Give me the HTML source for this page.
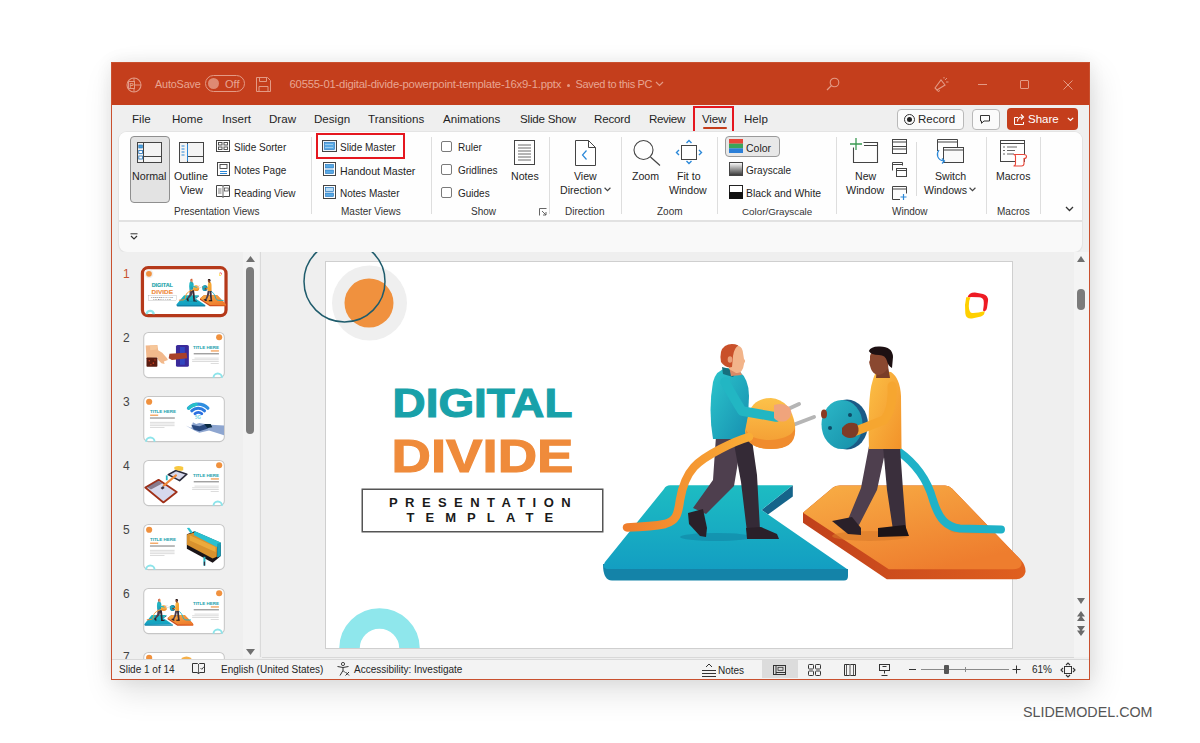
<!DOCTYPE html>
<html><head><meta charset="utf-8">
<style>
*{margin:0;padding:0;box-sizing:border-box}
html,body{width:1200px;height:743px;overflow:hidden;background:#fff;font-family:"Liberation Sans",sans-serif;color:#262626;position:relative}
.a{position:absolute}
.t{position:absolute;white-space:nowrap;line-height:1}
svg{position:absolute;overflow:visible}
.tt{color:#e8a592;font-size:11.5px}
.tab{font-size:11.6px;color:#1f1f1f;top:113px}
.rl{font-size:10px;color:#1f1f1f}
.gl{font-size:10px;color:#333;top:207px}
.vs{position:absolute;width:1px;background:#dedede;top:137px;height:77px}
.num{font-size:12px;color:#444}
.thumb{position:absolute;left:143px;width:82px;height:46px;background:#fff;border:1px solid #c8c8c8;border-radius:5px;overflow:hidden}
.st{font-size:10px;color:#262626;top:665px}
</style></head><body>
<!-- window shadow -->
<div class="a" style="left:111px;top:62px;width:979px;height:618px;box-shadow:0 0 16px rgba(0,0,0,0.07), 4px 12px 30px rgba(0,0,0,0.12)"></div>
<!-- window base -->
<div class="a" style="left:111px;top:62px;width:979px;height:618px;background:#efefef"></div>
<!-- title bar -->
<div class="a" style="left:111px;top:62px;width:979px;height:42.6px;background:#c43e1c"></div>

<!-- title bar content -->
<svg style="left:126px;top:77px" width="16" height="16" viewBox="0 0 16 16"><circle cx="8" cy="8" r="7" fill="none" stroke="#e39a85" stroke-width="1.1"/><path d="M8 1v14M8 8h7" stroke="#e39a85" stroke-width="1"/><rect x="2.5" y="4.5" width="6" height="7" fill="#c43e1c" stroke="#e39a85" stroke-width="1"/><text x="3.6" y="10.6" font-size="6.5" fill="#e39a85" font-family="Liberation Sans" font-weight="bold">P</text></svg>
<div class="t tt" style="left:155px;top:79px;font-size:10.8px;letter-spacing:-0.15px">AutoSave</div>
<div class="a" style="left:205px;top:75px;width:40px;height:17px;border:1px solid #e39a85;border-radius:9px"></div>
<div class="a" style="left:208px;top:78px;width:11px;height:11px;background:#de8a72;border-radius:50%"></div>
<div class="t tt" style="left:225px;top:79px;font-size:11px">Off</div>
<svg style="left:256px;top:77px" width="15" height="15" viewBox="0 0 15 15"><path d="M0.5 0.5h11l3 3v11h-14z" fill="none" stroke="#e39a85" stroke-width="1"/><path d="M3.5 0.5v4h7v-4M3 14.5v-5h9v5" fill="none" stroke="#e39a85" stroke-width="1"/></svg>
<div class="t tt" style="left:289.5px;top:79px;font-size:11.3px;letter-spacing:-0.21px">60555-01-digital-divide-powerpoint-template-16x9-1.pptx</div>
<div class="a" style="left:567px;top:84px;width:3px;height:3px;background:#e39a85;border-radius:50%"></div>
<div class="t tt" style="left:575.5px;top:79px;font-size:11px;letter-spacing:-0.33px">Saved to this PC</div>
<svg style="left:655px;top:81px" width="9" height="6" viewBox="0 0 9 6"><path d="M1 1l3.5 3.5L8 1" fill="none" stroke="#e39a85" stroke-width="1.2"/></svg>
<svg style="left:826px;top:77px" width="14" height="14" viewBox="0 0 14 14"><circle cx="8.5" cy="5.5" r="4.3" fill="none" stroke="#e39a85" stroke-width="1.1"/><path d="M5.5 8.5L1 13" stroke="#e39a85" stroke-width="1.3"/></svg>
<svg style="left:934px;top:77px" width="15" height="15" viewBox="0 0 15 15"><path d="M1 11l6-8 4 5-8 5z" fill="none" stroke="#e39a85" stroke-width="1.1"/><path d="M3 13l1 1.5 2-1" fill="none" stroke="#e39a85" stroke-width="1"/><path d="M11 3l2-2M12 5h2.5M10 1.5V0" stroke="#e39a85" stroke-width="1"/></svg>
<div class="a" style="left:978px;top:84px;width:9px;height:1px;background:#e39a85"></div>
<div class="a" style="left:1020px;top:80px;width:9px;height:9px;border:1px solid #e39a85;border-radius:1px"></div>
<svg style="left:1063px;top:80px" width="10" height="10" viewBox="0 0 10 10"><path d="M0.5 0.5l9 9M9.5 0.5l-9 9" stroke="#e39a85" stroke-width="1"/></svg>

<!-- tabs -->
<div class="t tab" style="left:132px">File</div>
<div class="t tab" style="left:172px">Home</div>
<div class="t tab" style="left:222px">Insert</div>
<div class="t tab" style="left:269px">Draw</div>
<div class="t tab" style="left:314px">Design</div>
<div class="t tab" style="left:368px">Transitions</div>
<div class="t tab" style="left:443px">Animations</div>
<div class="t tab" style="left:520px;letter-spacing:-0.2px">Slide Show</div>
<div class="t tab" style="left:594px;letter-spacing:-0.2px">Record</div>
<div class="t tab" style="left:649px;letter-spacing:-0.35px">Review</div>
<div class="t tab" style="left:702px;letter-spacing:-0.2px">View</div>
<div class="a" style="left:703px;top:127px;width:24px;height:2px;background:#c43e1c;border-radius:1px"></div>
<div class="t tab" style="left:744px">Help</div>
<div class="a" style="left:693px;top:106px;width:41px;height:30px;border:2px solid #e5171f"></div>
<!-- record / comment / share -->
<div class="a" style="left:897px;top:109px;width:67px;height:21px;border:1px solid #b9b9b9;border-radius:4px;background:#fbfbfb"></div>
<div class="a" style="left:904px;top:114px;width:11px;height:11px;border:1px solid #333;border-radius:50%"></div>
<div class="a" style="left:907px;top:117px;width:5px;height:5px;background:#222;border-radius:50%"></div>
<div class="t" style="left:918px;top:114px;font-size:11.5px;color:#262626">Record</div>
<div class="a" style="left:972px;top:109px;width:28px;height:21px;border:1px solid #b9b9b9;border-radius:4px;background:#fbfbfb"></div>
<svg style="left:979.5px;top:114.5px" width="10" height="9" viewBox="0 0 10 9"><path d="M0.5 0.5h9v5.5h-5.5l-2.5 2.3v-2.3h-1z" fill="none" stroke="#333" stroke-width="1"/></svg>
<div class="a" style="left:1007px;top:108px;width:71px;height:22px;background:#c43e1c;border-radius:4px"></div>
<svg style="left:1013px;top:113px" width="13" height="12" viewBox="0 0 13 12"><path d="M5 4.5H1.5v7h9V9" fill="none" stroke="#fff" stroke-width="1"/><path d="M4.5 8.5c0-3 2-4.5 5-4.5M8 1.5l2.5 2.5L8 6.5" fill="none" stroke="#fff" stroke-width="1.1"/></svg>
<div class="t" style="left:1028px;top:114px;font-size:11.5px;color:#fff">Share</div>
<svg style="left:1067px;top:117px" width="7" height="5" viewBox="0 0 7 5"><path d="M0.8 0.8l2.7 2.7 2.7-2.7" fill="none" stroke="#fff" stroke-width="1.2"/></svg>

<!-- ribbon card -->
<div class="a" style="left:119px;top:132px;width:963px;height:120px;background:#f9f9f9;border-radius:8px;box-shadow:0 0 0 1px #e4e4e4, 0 1px 2px rgba(0,0,0,0.06)"></div>
<div class="a" style="left:119px;top:132px;width:963px;height:88px;background:#fefefe;border-radius:8px 8px 0 0"></div>
<div class="a" style="left:119px;top:220px;width:963px;height:1.5px;background:#e2e2e2"></div>


<!-- ===== Presentation Views ===== -->
<div class="a" style="left:130px;top:136px;width:40px;height:67px;border:1px solid #8f8f8f;border-radius:4px;background:#e3e3e3"></div>
<svg style="left:137px;top:142px" width="25" height="21" viewBox="0 0 25 21"><rect x="0.5" y="0.5" width="24" height="20" fill="#f4f4f4" stroke="#444" stroke-width="1"/><path d="M6.5 0.5v20M6.5 14.5h18" stroke="#444" stroke-width="1"/><rect x="1.8" y="3" width="3.6" height="3" fill="#4aa3df" stroke="#1d6fb8" stroke-width="0.6"/><rect x="1.8" y="8.5" width="3.6" height="3" fill="#fff" stroke="#1d6fb8" stroke-width="0.8"/><rect x="1.8" y="14" width="3.6" height="3" fill="#fff" stroke="#1d6fb8" stroke-width="0.8"/></svg>
<div class="t rl" style="left:132px;top:171px;font-size:10.7px">Normal</div>
<svg style="left:179px;top:142px" width="25" height="21" viewBox="0 0 25 21"><rect x="0.5" y="0.5" width="24" height="20" fill="#f4f4f4" stroke="#444" stroke-width="1"/><path d="M8.5 0.5v20M8.5 14.5h16" stroke="#444" stroke-width="1"/><path d="M8.5 2v17" stroke="#2b88d8" stroke-width="1"/><path d="M2.5 4h3M2.5 7h3M2.5 10h3M2.5 13h3" stroke="#2b88d8" stroke-width="1"/></svg>
<div class="t rl" style="left:174px;top:171px;font-size:10.7px">Outline</div>
<div class="t rl" style="left:180px;top:185px;font-size:10.7px">View</div>
<svg style="left:216px;top:140px" width="14" height="12" viewBox="0 0 14 12"><rect x="0.5" y="0.5" width="13" height="11" fill="none" stroke="#444"/><rect x="2.5" y="2.5" width="3.5" height="2.5" fill="none" stroke="#444" stroke-width="0.9"/><rect x="8" y="2.5" width="3.5" height="2.5" fill="none" stroke="#444" stroke-width="0.9"/><rect x="2.5" y="7" width="3.5" height="2.5" fill="none" stroke="#444" stroke-width="0.9"/><rect x="8" y="7" width="3.5" height="2.5" fill="none" stroke="#444" stroke-width="0.9"/></svg>
<div class="t rl" style="left:234px;top:143px">Slide Sorter</div>
<svg style="left:217px;top:162px" width="13" height="14" viewBox="0 0 13 14"><rect x="0.5" y="0.5" width="12" height="13" fill="none" stroke="#444"/><rect x="3" y="2.5" width="7" height="4" fill="none" stroke="#444" stroke-width="0.9"/><path d="M3 9.5h7M3 11.5h7" stroke="#2b88d8" stroke-width="1"/></svg>
<div class="t rl" style="left:234px;top:166px">Notes Page</div>
<svg style="left:216px;top:185px" width="14" height="13" viewBox="0 0 14 13"><path d="M0.5 0.5h6l0.5 1 0.5-1h6v11h-6l-0.5 1-0.5-1h-6z" fill="none" stroke="#444"/><path d="M7 1.5v10" stroke="#444" stroke-width="0.8"/><path d="M2 4h3.5M2 6h3.5M2 8h3.5" stroke="#444" stroke-width="0.7"/><rect x="8.6" y="3" width="3.6" height="3" fill="none" stroke="#444" stroke-width="0.7"/></svg>
<div class="t rl" style="left:234px;top:189px">Reading View</div>
<div class="t gl" style="left:174px">Presentation Views</div>
<div class="vs" style="left:311px"></div>

<!-- ===== Master Views ===== -->
<div class="a" style="left:316px;top:133px;width:89px;height:26px;border:2px solid #e5171f"></div>
<svg style="left:322px;top:140px" width="15" height="12" viewBox="0 0 15 12"><rect x="0.5" y="0.5" width="14" height="11" fill="#e9f2fb" stroke="#444"/><rect x="2.5" y="2.5" width="10" height="7" fill="#58a9e5" stroke="#1d6fb8" stroke-width="0.6"/><path d="M3.5 4.5h8M3.5 7.5h8" stroke="#fff" stroke-width="0.8" stroke-dasharray="1 1"/></svg>
<div class="t rl" style="left:340px;top:143px">Slide Master</div>
<svg style="left:323px;top:162px" width="13" height="14" viewBox="0 0 13 14"><rect x="0.5" y="0.5" width="12" height="13" fill="#fff" stroke="#444"/><rect x="2.5" y="2.5" width="8" height="3.5" fill="#58a9e5" stroke="#1d6fb8" stroke-width="0.6"/><rect x="2.5" y="8" width="8" height="3.5" fill="#58a9e5" stroke="#1d6fb8" stroke-width="0.6"/></svg>
<div class="t rl" style="left:340px;top:166px;font-size:10.6px">Handout Master</div>
<svg style="left:323px;top:185px" width="13" height="14" viewBox="0 0 13 14"><rect x="0.5" y="0.5" width="12" height="13" fill="#fff" stroke="#444"/><rect x="2.5" y="2.5" width="8" height="4" fill="#b9dcf5" stroke="#1d6fb8" stroke-width="0.7"/><rect x="2.5" y="8" width="8" height="3.5" fill="#58a9e5" stroke="#1d6fb8" stroke-width="0.6"/></svg>
<div class="t rl" style="left:340px;top:189px">Notes Master</div>
<div class="t gl" style="left:341px">Master Views</div>
<div class="vs" style="left:431px"></div>

<!-- ===== Show ===== -->
<div class="a" style="left:441px;top:141px;width:11px;height:11px;border:1px solid #7a7a7a;border-radius:2px;background:#fff"></div>
<div class="t rl" style="left:458px;top:143px">Ruler</div>
<div class="a" style="left:441px;top:164px;width:11px;height:11px;border:1px solid #7a7a7a;border-radius:2px;background:#fff"></div>
<div class="t rl" style="left:458px;top:166px">Gridlines</div>
<div class="a" style="left:441px;top:187px;width:11px;height:11px;border:1px solid #7a7a7a;border-radius:2px;background:#fff"></div>
<div class="t rl" style="left:458px;top:189px">Guides</div>
<svg style="left:514px;top:140px" width="21" height="25" viewBox="0 0 21 25"><rect x="0.5" y="0.5" width="20" height="24" fill="#fff" stroke="#444"/><path d="M4 5h13M4 8h13M4 11h13M4 14h13M4 17h13M4 20h13" stroke="#444" stroke-width="0.8"/></svg>
<div class="t rl" style="left:511px;top:171px;font-size:10.6px">Notes</div>
<div class="t gl" style="left:471px">Show</div>
<svg style="left:539px;top:208px" width="8" height="8" viewBox="0 0 8 8"><path d="M0.5 7.5v-7h7" fill="none" stroke="#555" stroke-width="0.9"/><path d="M3 3l4 4M7 4v3H4" fill="none" stroke="#555" stroke-width="0.9"/></svg>
<div class="vs" style="left:549px"></div>

<!-- ===== Direction ===== -->
<svg style="left:575px;top:140px" width="21" height="26" viewBox="0 0 21 26"><path d="M0.5 0.5h13l7 7v18h-20z" fill="#fff" stroke="#444"/><path d="M13.5 0.5v7h7" fill="none" stroke="#444"/><path d="M11.5 10.5l-4 4.5 4 4.5" fill="none" stroke="#2b88d8" stroke-width="1.2"/></svg>
<div class="t rl" style="left:574px;top:171px;font-size:10.6px">View</div>
<div class="t rl" style="left:560px;top:185px;font-size:10.6px">Direction</div>
<svg style="left:604px;top:187px" width="7" height="5" viewBox="0 0 6 4"><path d="M0.5 0.5l2.5 2.5 2.5-2.5" fill="none" stroke="#444" stroke-width="1"/></svg>
<div class="t gl" style="left:565px">Direction</div>
<div class="vs" style="left:621px"></div>

<!-- ===== Zoom ===== -->
<svg style="left:633px;top:140px" width="28" height="26" viewBox="0 0 28 26"><circle cx="10.5" cy="10" r="9.5" fill="none" stroke="#444" stroke-width="1.1"/><path d="M17.5 17l9.5 8.5" stroke="#444" stroke-width="1.2"/></svg>
<div class="t rl" style="left:632px;top:171px;font-size:10.6px">Zoom</div>
<svg style="left:676px;top:140px" width="26" height="24" viewBox="0 0 26 24"><rect x="5.5" y="5.5" width="15" height="14" fill="#fff" stroke="#444"/><path d="M10.5 3l2.5-2.5 2.5 2.5M10.5 21l2.5 2.5 2.5-2.5M3 10l-2.5 2.5L3 15M23 10l2.5 2.5L23 15" fill="none" stroke="#2b88d8" stroke-width="1.4"/></svg>
<div class="t rl" style="left:677px;top:171px;font-size:10.6px">Fit to</div>
<div class="t rl" style="left:669px;top:185px;font-size:10.6px">Window</div>
<div class="t gl" style="left:657px">Zoom</div>
<div class="vs" style="left:717px"></div>

<!-- ===== Color/Grayscale ===== -->
<div class="a" style="left:725px;top:136px;width:55px;height:21px;border:1px solid #9a9a9a;border-radius:4px;background:#e8e8e8"></div>
<svg style="left:729px;top:139px" width="14" height="14" viewBox="0 0 14 14"><rect x="0" y="0" width="14" height="4.7" fill="#e8473a"/><rect x="0" y="4.7" width="14" height="4.6" fill="#3aa55a"/><rect x="0" y="9.3" width="14" height="4.7" fill="#2b7fd8"/></svg>
<div class="t rl" style="left:746px;top:143px;font-size:10.5px">Color</div>
<svg style="left:729px;top:162px" width="14" height="14" viewBox="0 0 14 14"><defs><linearGradient id="gg" x1="0" y1="0" x2="0" y2="1"><stop offset="0" stop-color="#fff"/><stop offset="1" stop-color="#333"/></linearGradient></defs><rect x="0.5" y="0.5" width="13" height="13" fill="url(#gg)" stroke="#444"/></svg>
<div class="t rl" style="left:746px;top:166px">Grayscale</div>
<svg style="left:729px;top:185px" width="14" height="14" viewBox="0 0 14 14"><rect x="0.5" y="0.5" width="13" height="13" fill="#fff" stroke="#222"/><rect x="0" y="7" width="14" height="7" fill="#111"/></svg>
<div class="t rl" style="left:746px;top:189px;font-size:10.4px">Black and White</div>
<div class="t gl" style="left:742px;font-size:9.8px">Color/Grayscale</div>
<div class="vs" style="left:836px"></div>

<!-- ===== Window ===== -->
<svg style="left:850px;top:138px" width="28" height="25" viewBox="0 0 28 25"><path d="M3.5 9.5v15h24v-20h-14" fill="none" stroke="#444" stroke-width="1.1"/><path d="M14 7.5h13.5" stroke="#444" stroke-width="1"/><path d="M6 0v12M0 6h12" stroke="#3a9a52" stroke-width="1.3"/></svg>
<div class="t rl" style="left:855px;top:171px;font-size:10.6px">New</div>
<div class="t rl" style="left:846px;top:185px;font-size:10.8px">Window</div>
<svg style="left:892px;top:139px" width="15" height="15" viewBox="0 0 15 15"><rect x="0.5" y="0.5" width="14" height="14" fill="none" stroke="#444"/><path d="M0.5 3h14M0.5 7.5h14M0.5 10h14" stroke="#444"/></svg>
<svg style="left:892px;top:162px" width="15" height="15" viewBox="0 0 15 15"><path d="M0.5 8.5v-8h10v3" fill="none" stroke="#444"/><path d="M0.5 2.5h10" stroke="#444"/><rect x="4.5" y="6.5" width="10" height="8" fill="none" stroke="#444"/><path d="M4.5 8.5h10" stroke="#444"/></svg>
<svg style="left:892px;top:186px" width="15" height="14" viewBox="0 0 15 14"><path d="M8 13.5H0.5v-13h14v7" fill="none" stroke="#444"/><path d="M0.5 3h14" stroke="#444"/><path d="M11.5 8v6M8.5 11h6" stroke="#2b88d8" stroke-width="1.2"/></svg>
<div class="a" style="left:916px;top:142px;width:1px;height:54px;background:#dcdcdc"></div>
<svg style="left:936px;top:139px" width="28" height="27" viewBox="0 0 28 27"><path d="M1.5 12V0.5h20v9" fill="none" stroke="#444"/><path d="M1.5 3h20" stroke="#444"/><rect x="7.5" y="8.5" width="20" height="15" fill="#fafafa" stroke="#444"/><path d="M7.5 11h20" stroke="#444"/><path d="M3 11c-3 4-2 10 5 11" fill="none" stroke="#2b88d8" stroke-width="1.2"/><path d="M6 19.5l2.5 2.5-2.5 2.5" fill="none" stroke="#2b88d8" stroke-width="1.2"/></svg>
<div class="t rl" style="left:935px;top:171px;font-size:10.6px">Switch</div>
<div class="t rl" style="left:924px;top:185px;font-size:10.6px">Windows</div>
<svg style="left:969px;top:187px" width="7" height="5" viewBox="0 0 6 4"><path d="M0.5 0.5l2.5 2.5 2.5-2.5" fill="none" stroke="#444" stroke-width="1"/></svg>
<div class="t gl" style="left:892px">Window</div>
<div class="vs" style="left:986px"></div>

<!-- ===== Macros ===== -->
<svg style="left:1000px;top:140px" width="29" height="27" viewBox="0 0 29 27"><rect x="0.5" y="0.5" width="24" height="21" fill="#fff" stroke="#444"/><path d="M0.5 3.5h24" stroke="#444"/><path d="M3 7h2M7 7h10M3 10.5h2M7 10.5h8M3 14h2M7 14h7" stroke="#555" stroke-width="0.9"/><path d="M13.5 14.5h10c2 0 3 1 3 2s-1 2-2.5 2v5c0 1.5-1 2.5-2.5 2.5h-8c1.5 0 2-1 2-2.5v-7c0-1-1-2-2-2z" fill="#fff" stroke="#e8473a" stroke-width="1.1"/></svg>
<div class="t rl" style="left:996px;top:171px;font-size:10.5px">Macros</div>
<div class="t gl" style="left:997px">Macros</div>
<div class="vs" style="left:1040px"></div>
<svg style="left:1065px;top:206px" width="9" height="6" viewBox="0 0 9 6"><path d="M1 1l3.5 3.5L8 1" fill="none" stroke="#333" stroke-width="1.3"/></svg>

<!-- QAT -->
<svg style="left:130px;top:233px" width="8" height="7" viewBox="0 0 8 7"><path d="M0.5 0.8h7" stroke="#333" stroke-width="1"/><path d="M1 3l3 3 3-3" fill="none" stroke="#333" stroke-width="1.2"/></svg>


<!-- ===== left panel ===== -->
<div class="a" style="left:112px;top:252px;width:148px;height:405px;background:#efefef"></div>
<div class="a" style="left:260px;top:252px;width:1px;height:405px;background:#dadada"></div>
<div class="a" style="left:261px;top:252px;width:828px;height:405px;background:#efefef"></div>
<!-- panel scrollbar -->
<div class="a" style="left:243px;top:252px;width:16px;height:406px;background:#f3f3f3"></div>
<svg style="left:246px;top:256px" width="9" height="6" viewBox="0 0 9 6"><path d="M0 6L4.5 0 9 6z" fill="#6f6f6f"/></svg>
<div class="a" style="left:246px;top:267px;width:8px;height:167px;background:#7b7b7b;border-radius:4px"></div>
<svg style="left:246px;top:649px" width="9" height="6" viewBox="0 0 9 6"><path d="M0 0L4.5 6 9 0z" fill="#6f6f6f"/></svg>

<!-- thumbnails -->
<div class="t num" style="left:123px;top:268px;color:#c8502c">1</div>
<svg style="left:138px;top:262px" width="94" height="60" viewBox="0 0 1164 743">
  <rect x="55" y="70" width="1035" height="595" rx="70" fill="#fff" stroke="#b5391a" stroke-width="40"/>
  <svg x="73" y="87" width="999" height="561" viewBox="326 262 686 386" preserveAspectRatio="none"><use href="#slideall"/></svg>
</svg>
<div class="t num" style="left:123px;top:332px">2</div>
<svg style="left:138px;top:326px" width="94" height="60" viewBox="0 0 1164 743">
  <rect x="71" y="81" width="998" height="558" rx="58" fill="#fff" stroke="#c6c6c6" stroke-width="13"/>
  <path d="M95 240 L240 235 L250 300 L300 330 L360 400 L370 420 L320 440 L330 470 L290 460 L250 420 L240 390 L105 400 Z" fill="#f2b98c"/>
  <path d="M150 240 L240 240 L230 290 L150 300 Z" fill="#f6c79a"/>
  <rect x="105" y="390" width="135" height="115" rx="10" fill="#5a1c10"/>
  <circle cx="140" cy="430" r="10" fill="#d04020"/><circle cx="190" cy="460" r="10" fill="#d04020"/><circle cx="160" cy="480" r="8" fill="#d04020"/><circle cx="210" cy="420" r="8" fill="#d04020"/>
  <rect x="470" y="235" width="160" height="270" rx="20" fill="#3a2a9a"/>
  <rect x="520" y="260" width="60" height="220" fill="#2b5ad8" opacity="0.6"/>
  <path d="M390 345 L600 330 L610 400 L420 420 L380 400 Z" fill="#a8402a"/>
  <text x="680" y="282" font-family="Liberation Sans" font-weight="bold" font-size="50" fill="#1aa0ab" textLength="322" lengthAdjust="spacingAndGlyphs">TITLE HERE</text>
  <rect x="902" y="302" width="100" height="14" fill="#f0913e"/>
  <rect x="690" y="337" width="312" height="14" fill="#6a6a6a" opacity="0.8"/>
  <rect x="700" y="393" width="300" height="8" fill="#c9c9c9"/><rect x="670" y="415" width="330" height="8" fill="#c9c9c9"/><rect x="670" y="437" width="330" height="8" fill="#c9c9c9"/><rect x="900" y="459" width="100" height="8" fill="#c9c9c9"/>
  <circle cx="1005" cy="140" r="38" fill="#f0913e"/>
  <path d="M935 640 A52 52 0 0 1 1040 640" fill="none" stroke="#8de4ea" stroke-width="24"/>

</svg>
<div class="t num" style="left:123px;top:396px">3</div>
<svg style="left:138px;top:390px" width="94" height="60" viewBox="0 0 1164 743">
  <rect x="71" y="81" width="998" height="558" rx="58" fill="#fff" stroke="#c6c6c6" stroke-width="13"/>
  <path d="M625 225 A170 170 0 0 1 865 225" fill="none" stroke="#2f8ee0" stroke-width="40" stroke-linecap="round"/>
  <path d="M665 258 A115 115 0 0 1 825 258" fill="none" stroke="#2b7ae0" stroke-width="36" stroke-linecap="round"/>
  <path d="M705 295 A60 60 0 0 1 790 295" fill="none" stroke="#2b6fe0" stroke-width="34" stroke-linecap="round"/>
  <path d="M630 225 A170 170 0 0 1 720 178" fill="none" stroke="#27c0c8" stroke-width="40" stroke-linecap="round"/>
  <text x="705" y="362" font-family="Liberation Sans" font-weight="bold" font-size="55" fill="#6ad0e8">5G</text>
  <path d="M590 440 L660 470 L680 400 L720 420 L760 410 L830 420 L900 430 L1065 440 L1065 560 L880 500 L760 530 L700 500 Z" fill="#8ea6d0"/>
  <path d="M660 430 L760 450 L840 420 L900 440 L860 480 L760 510 L690 490 Z" fill="#2a4a80"/>
  <path d="M820 420 L900 420 L920 460 L860 470 Z" fill="#0a2a40"/>
  <text x="148" y="282" font-family="Liberation Sans" font-weight="bold" font-size="50" fill="#1aa0ab" textLength="322" lengthAdjust="spacingAndGlyphs">TITLE HERE</text>
  <rect x="150" y="305" width="100" height="14" fill="#f0913e"/>
  <rect x="148" y="340" width="308" height="14" fill="#6a6a6a" opacity="0.8"/>
  <rect x="148" y="395" width="305" height="8" fill="#c9c9c9"/><rect x="148" y="417" width="305" height="8" fill="#c9c9c9"/><rect x="148" y="439" width="305" height="8" fill="#c9c9c9"/><rect x="148" y="461" width="180" height="8" fill="#c9c9c9"/>
  <circle cx="138" cy="145" r="38" fill="#f0913e"/>
  <path d="M100 640 A52 52 0 0 1 205 640" fill="none" stroke="#8de4ea" stroke-width="24"/>

</svg>
<div class="t num" style="left:123px;top:460px">4</div>
<svg style="left:138px;top:454px" width="94" height="60" viewBox="0 0 1164 743">
  <rect x="71" y="81" width="998" height="558" rx="58" fill="#fff" stroke="#c6c6c6" stroke-width="13"/>
  <path d="M90 415 L255 320 L480 470 L315 600 Z" fill="#d6d8ec" stroke="#a03018" stroke-width="22" stroke-linejoin="round"/>
  <path d="M110 410 L250 330 L300 365 L160 440 Z" fill="#3a2030" opacity="0.5"/>
  <path d="M375 255 L470 205 L605 250 L515 330 Z" fill="#d6d8ec" stroke="#2a2a3a" stroke-width="20" stroke-linejoin="round"/>
  <path d="M320 390 L470 265" stroke="#f08a3a" stroke-width="28" stroke-linecap="round"/>
  <path d="M280 420 L310 395 L330 420 L300 440 Z" fill="#3a3040"/>
  <path d="M450 160 Q500 135 560 160 L560 200 Q500 220 450 190 Z" fill="#f8c840"/>
  <rect x="345" y="265" width="22" height="60" fill="#2ab3c3"/>
  <text x="680" y="282" font-family="Liberation Sans" font-weight="bold" font-size="50" fill="#1aa0ab" textLength="322" lengthAdjust="spacingAndGlyphs">TITLE HERE</text>
  <rect x="902" y="302" width="100" height="14" fill="#f0913e"/>
  <rect x="690" y="337" width="312" height="14" fill="#6a6a6a" opacity="0.8"/>
  <rect x="700" y="393" width="300" height="8" fill="#c9c9c9"/><rect x="670" y="415" width="330" height="8" fill="#c9c9c9"/><rect x="670" y="437" width="330" height="8" fill="#c9c9c9"/><rect x="900" y="459" width="100" height="8" fill="#c9c9c9"/>
  <circle cx="1005" cy="140" r="38" fill="#f0913e"/>
  <path d="M935 640 A52 52 0 0 1 1040 640" fill="none" stroke="#8de4ea" stroke-width="24"/>

</svg>
<div class="t num" style="left:123px;top:524px">5</div>
<svg style="left:138px;top:518px" width="94" height="60" viewBox="0 0 1164 743">
  <rect x="71" y="81" width="998" height="558" rx="58" fill="#fff" stroke="#c6c6c6" stroke-width="13"/>
  <path d="M605 200 L700 165 L1025 305 L1025 470 L925 555 L605 380 Z" fill="#1a1418"/>
  <path d="M605 205 L700 180 L980 315 L975 480 L925 500 L605 330 Z" fill="#d8922e"/>
  <path d="M640 215 L960 360 L960 420 L640 280 Z" fill="#f0b040" opacity="0.8"/>
  <path d="M700 160 L1020 300 L1025 330 L975 360 L690 210 Z" fill="#2ac0d0"/>
  <path d="M980 320 L1025 305 L1025 470 L980 490 Z" fill="#1aa0b8"/>
  <path d="M605 125 L635 120 L680 180 L650 190 Z" fill="#2ac0d0"/>
  <rect x="810" y="480" width="25" height="110" fill="#2ab3c3"/>
  <rect x="815" y="540" width="15" height="50" fill="#3a3040"/>
  <text x="148" y="282" font-family="Liberation Sans" font-weight="bold" font-size="50" fill="#1aa0ab" textLength="322" lengthAdjust="spacingAndGlyphs">TITLE HERE</text>
  <rect x="150" y="305" width="100" height="14" fill="#f0913e"/>
  <rect x="148" y="340" width="308" height="14" fill="#6a6a6a" opacity="0.8"/>
  <rect x="148" y="395" width="305" height="8" fill="#c9c9c9"/><rect x="148" y="417" width="305" height="8" fill="#c9c9c9"/><rect x="148" y="439" width="305" height="8" fill="#c9c9c9"/><rect x="148" y="461" width="180" height="8" fill="#c9c9c9"/>
  <circle cx="138" cy="145" r="38" fill="#f0913e"/>
  <path d="M100 640 A52 52 0 0 1 205 640" fill="none" stroke="#8de4ea" stroke-width="24"/>

</svg>
<div class="t num" style="left:123px;top:588px">6</div>
<svg style="left:138px;top:582px" width="94" height="60" viewBox="0 0 1164 743">
  <rect x="71" y="81" width="998" height="558" rx="58" fill="#fff" stroke="#c6c6c6" stroke-width="13"/>
  <svg x="78" y="83" width="986" height="549" viewBox="326 262 686 386" preserveAspectRatio="none"><use href="#illu" transform="translate(-276,5)"/></svg>
  <text x="680" y="282" font-family="Liberation Sans" font-weight="bold" font-size="50" fill="#1aa0ab" textLength="322" lengthAdjust="spacingAndGlyphs">TITLE HERE</text>
  <rect x="902" y="302" width="100" height="14" fill="#f0913e"/>
  <rect x="690" y="337" width="312" height="14" fill="#6a6a6a" opacity="0.8"/>
  <rect x="700" y="393" width="300" height="8" fill="#c9c9c9"/><rect x="670" y="415" width="330" height="8" fill="#c9c9c9"/><rect x="670" y="437" width="330" height="8" fill="#c9c9c9"/><rect x="900" y="459" width="100" height="8" fill="#c9c9c9"/>
  <circle cx="1005" cy="140" r="38" fill="#f0913e"/>
  <path d="M935 640 A52 52 0 0 1 1040 640" fill="none" stroke="#8de4ea" stroke-width="24"/>

</svg>
<div class="t num" style="left:123px;top:651px">7</div>
<div class="a" style="left:138px;top:646px;width:94px;height:13px;overflow:hidden">
<svg style="left:0;top:0" width="94" height="60" viewBox="0 0 1164 743">
  <rect x="71" y="81" width="998" height="558" rx="58" fill="#fff" stroke="#c6c6c6" stroke-width="13"/>
  <circle cx="138" cy="145" r="38" fill="#f0913e"/>
  <path d="M540 150 Q600 110 660 150 L660 200 L540 200 Z" fill="#f5b04a"/>
  <rect x="560" y="170" width="90" height="30" fill="#2ab3c3"/>
</svg>
</div>

<!-- ===== main slide ===== -->
<div class="a" style="left:325px;top:261px;width:688px;height:388px;background:#fff;border:1px solid #cfcfcf"></div>
<div class="a" style="left:261px;top:252px;width:813px;height:405px;overflow:hidden">
<svg id="mainsvg" style="left:-261px;top:-252px" width="1200" height="743" viewBox="0 0 1200 743">
  <defs>
    <clipPath id="slideclip"><rect x="326" y="262" width="686" height="386"/></clipPath>

    <linearGradient id="tT" x1="0" y1="0" x2="0" y2="1"><stop offset="0" stop-color="#1dbcc2"/><stop offset="1" stop-color="#139ec2"/></linearGradient>
    <linearGradient id="oT" x1="0" y1="0" x2="0.6" y2="1"><stop offset="0" stop-color="#f8ae45"/><stop offset="1" stop-color="#ee7d2e"/></linearGradient>
    <linearGradient id="oS" x1="0" y1="0" x2="1" y2="0"><stop offset="0" stop-color="#c0401b"/><stop offset="1" stop-color="#e0601f"/></linearGradient>
    <linearGradient id="sh1" x1="0" y1="0" x2="1" y2="1"><stop offset="0" stop-color="#2cc6cc"/><stop offset="1" stop-color="#178fb0"/></linearGradient>
    <linearGradient id="sh2" x1="0" y1="0" x2="1" y2="1"><stop offset="0" stop-color="#fcc046"/><stop offset="1" stop-color="#f2922a"/></linearGradient>
    <linearGradient id="plug" x1="0" y1="0" x2="0" y2="1"><stop offset="0" stop-color="#fcc24a"/><stop offset="1" stop-color="#f39a32"/></linearGradient>
    <linearGradient id="cabO" x1="0" y1="0" x2="1" y2="0"><stop offset="0" stop-color="#f07e2c"/><stop offset="1" stop-color="#f9ad36"/></linearGradient>
    <linearGradient id="sock" x1="0" y1="0" x2="1" y2="1"><stop offset="0" stop-color="#2cb8c8"/><stop offset="1" stop-color="#168ea8"/></linearGradient>
  
  </defs>
  <g id="slideall">
  <g id="deco">
    <g clip-path="url(#slideclip)">
      <circle cx="369.5" cy="303" r="37.5" fill="#efefef"/>
      <circle cx="369" cy="303" r="24.5" fill="#f0913e"/>
      <circle cx="379.5" cy="648.5" r="30" fill="none" stroke="#8fe7ec" stroke-width="20.5"/>
    </g>
  </g>
  <g id="titleg">
    <text x="392.6" y="417.2" font-family="Liberation Sans" font-weight="bold" font-size="40" fill="#18a1a9" stroke="#18a1a9" stroke-width="1.1" textLength="179.8" lengthAdjust="spacingAndGlyphs">DIGITAL</text>
    <text x="391.6" y="472" font-family="Liberation Sans" font-weight="bold" font-size="46" fill="#ef8b3b" stroke="#ef8b3b" stroke-width="1.1" textLength="181.8" lengthAdjust="spacingAndGlyphs">DIVIDE</text>
    <rect x="362.25" y="489.25" width="240.5" height="42.5" fill="none" stroke="#555" stroke-width="1.5"/>
    <text x="389" y="507.2" font-family="Liberation Sans" font-weight="bold" font-size="13" fill="#1a1a1a" textLength="181.6" lengthAdjust="spacing">PRESENTATION</text>
    <text x="406.4" y="522" font-family="Liberation Sans" font-weight="bold" font-size="13" fill="#1a1a1a" textLength="146.7" lengthAdjust="spacing">TEMPLATE</text>
  </g>
  <g id="illu">
  <!-- teal platform -->
  <path d="M603,564 Q603,580.6 612,580.6 L844,580.6 Q848,580.6 848,576 L848,569 Z" fill="#1483a8"/>
  <path d="M792.8,485.3 L792.8,496.5 L768,514.5 L761.5,510 Z" fill="#15648a"/>
  <path d="M670,485.3 L792.8,485.3 L761.5,510 L847,569 L609,569 Q601,569 605,562 L664,489 Q666,485.3 670,485.3 Z" fill="url(#tT)"/>
  <!-- orange platform -->
  <path d="M803,512.7 L833,487.5 Q835.5,485.4 840,485.4 L945,485.4 Q949,485.4 952,488.5 L1021,560 Q1026,566 1025.5,572 Q1024,579.3 1015,579.3 L886.8,579.3 L803,522.8 Z" fill="url(#oS)"/>
  <path d="M803,512.7 L833,487.5 Q835.5,485.4 840,485.4 L945,485.4 Q949,485.4 952,488.5 L1019,558 Q1023,562.5 1021,566 Q1019,569.2 1013,569.2 L888.8,569.2 Z" fill="url(#oT)"/>
  <!-- shadows -->
  <ellipse cx="716" cy="537" rx="36" ry="4" fill="#128aa8" opacity="0.7"/>
  <ellipse cx="870" cy="536" rx="38" ry="5" fill="#d9792a" opacity="0.6"/>
  <ellipse cx="975" cy="531" rx="25" ry="2.5" fill="#d9792a" opacity="0.5"/>

  <!-- man 1 legs -->
  <path d="M716,436 L742,438 L734,486 L706,514 L693,508 L713,480 Z" fill="#4e3f4e"/>
  <path d="M733,438 L752,440 L757,475 L760,530 L747,532 L741,482 Z" fill="#342a36"/>
  <path d="M688,513 L703,509 L707,528 L706,537 L700,536 L689,524 Z" fill="#2a2029"/>
  <path d="M746,528 L761,527 L777,534 L779,539 L747,539 Z" fill="#2a2029"/>
  <!-- man 1 torso -->
  <path d="M713,382 Q716,370 727,368 L739,371 Q749,379 749,396 L747,439 L713,439 Q708,410 713,382 Z" fill="url(#sh1)"/>
  <path d="M722,367 L738,371 L733,377 L723,374 Z" fill="#16707e"/>
  <!-- man 1 head -->
  <path d="M729,366 L739,369 L742,375 L731,376 Z" fill="#d98a66"/>
  <path d="M731,350 Q734,345.5 739,346 Q742.5,347 743.2,354 L744,359 Q746.2,361.2 744.2,363 Q743.6,368 741.5,371 Q739.5,373.5 736,373 L729,369 L729,354 Z" fill="#f2b48a"/>
  <path d="M721,362 Q719,350 725,346 Q731,342.5 738.5,345.5 Q734,348 733,356 L732,367 Q726,369 721,362 Z" fill="#c9502a"/>
  <ellipse cx="730" cy="359.5" rx="2.3" ry="3.3" fill="#e9a07a"/>
  <!-- plug -->
  <path d="M786,410 L799,404" stroke="#b5b5b5" stroke-width="4" stroke-linecap="round"/>
  <path d="M793,425 L814,417" stroke="#b5b5b5" stroke-width="4" stroke-linecap="round"/>
  <path d="M748,416 Q752,398 771,398 Q791,400 795,425 Q797,449 771,449 Q746,449 745,431 Z" fill="url(#plug)"/>
  <path d="M746,430 Q750,440 771,440 Q792,438 795,428 Q797,449 771,449 Q746,449 746,430 Z" fill="#f08c2e"/>
  <!-- man 1 arm + hand -->
  <path d="M725,382 Q735,400 742,411 L776,417" fill="none" stroke="#22b6c3" stroke-width="9.5" stroke-linecap="round" stroke-linejoin="round"/>
  <path d="M774,405 Q784,402 790,408 Q794,416 786,421 Q778,423 774,418 Z" fill="#f0a47c"/>
  <!-- orange cable -->
  <path d="M749,437 C735,441 705,455 694,467 C685,477 682,488 680,500 C678,515 676,521 665,524 C655,526 640,527 627,527.5" fill="none" stroke="url(#cabO)" stroke-width="8.5" stroke-linecap="round"/>

  <!-- man 2 legs + cable -->
  <path d="M898,451 C915,463 927,478 933,500 C939,519 946,527 960,528.5 L1001,529.5" fill="none" stroke="#1fb2c8" stroke-width="8" stroke-linecap="round"/>
  <path d="M869,446 L886,448 L877,490 L859,525 L847,522 L861,488 Z" fill="#4e3f4e"/>
  <path d="M883,446 L900,447 L903,490 L906,528 L893,530 L887,490 Z" fill="#3a2f3c"/>
  <path d="M832,521 L852,517 L861,528 L861,535 L848,534 Z" fill="#2a2029"/>
  <path d="M878,528 L905,525 L909,536 L878,537 Z" fill="#1c1418"/>
  <!-- man 2 torso -->
  <path d="M875,374 Q883,370.5 891,372 Q900,378 901,396 L901.5,449 L869,449 Q868,420 869.5,400 Q870.5,384 875,374 Z" fill="url(#sh2)"/>
  <!-- man 2 head -->
  <path d="M877,366 L888,366 L890,378 L876,378 Z" fill="#7a3e28"/>
  <path d="M870,356 Q871,350 878,350 L886,352 Q889,360 888,368 Q884,375 878,375 Q873,374 871,369 L869.5,364 Q868.5,362 870,360 Z" fill="#8a4830"/>
  <path d="M868.8,351 Q871,346 880,346.5 Q892.5,346.5 893,357 L892,368 Q888,366 887,361 Q885.5,355 879,355 Q871,355 868.8,351 Z" fill="#1d1012"/>
  <!-- socket -->
  <ellipse cx="847" cy="424.5" rx="21" ry="25" fill="#1a5a86"/>
  <ellipse cx="842" cy="424.5" rx="20.5" ry="24.5" fill="url(#sock)"/>
  <circle cx="850" cy="415" r="2" fill="#0f4a66"/>
  <circle cx="830" cy="428" r="2" fill="#0f4a66"/>
  <ellipse cx="824" cy="414" rx="3" ry="4.5" fill="#8a3a22"/>
  <!-- man 2 arm + hand -->
  <path d="M892,386 Q893,410 884,420 L856,431" fill="none" stroke="#f6a630" stroke-width="9" stroke-linecap="round" stroke-linejoin="round"/>
  <path d="M842,428 Q848,420 857,424 Q861,432 855,437 Q847,440 842,434 Z" fill="#7e3c26"/>

</g>
  <g id="logo">
    <path d="M967.5,297.5 Q969,292.3 975,292.5 L983,294 Q988.5,295.5 988,301 L987,308 Q986.5,311 984.5,311.5 L983,310.5 Q984.2,304 983.6,300.5 Q983,297.6 979,297.2 L971,297 Z" fill="#ee1b24"/>
    <path d="M966.2,297.2 L970.5,297.2 Q968.6,301 968.8,306 Q969,312.5 972,313 Q977,313.3 984.5,311.3 Q985,315 981,316.5 L972,318.5 Q966,319.3 965.3,313.5 Q964.2,305 966.2,297.2 Z" fill="#ffd000"/>
  </g>
  </g>
  <circle cx="344.5" cy="281.5" r="40.5" fill="none" stroke="#1f5c6c" stroke-width="1.5"/>
</svg>
</div>

<!-- main area scrollbar -->
<div class="a" style="left:1074px;top:252px;width:15px;height:405px;background:#f4f4f4"></div>
<svg style="left:1077px;top:256px" width="8" height="6" viewBox="0 0 8 6"><path d="M0 6L4 0 8 6z" fill="#6f6f6f"/></svg>
<div class="a" style="left:1077px;top:289px;width:8px;height:21px;background:#7b7b7b;border-radius:4px"></div>
<svg style="left:1077px;top:598px" width="8" height="6" viewBox="0 0 8 6"><path d="M0 0L4 6 8 0z" fill="#6f6f6f"/></svg>
<svg style="left:1077px;top:611px" width="8" height="10" viewBox="0 0 8 10"><path d="M0 5.5L4 0 8 5.5zM0 10L4 4.5 8 10z" fill="#6a6a6a"/></svg>
<svg style="left:1077px;top:626px" width="8" height="10" viewBox="0 0 8 10"><path d="M0 0L4 5.5 8 0zM0 4.5L4 10 8 4.5z" fill="#6a6a6a"/></svg>

<div class="a" style="left:262px;top:657px;width:812px;height:1px;background:#d8d8d8"></div>
<!-- ===== status bar ===== -->
<div class="a" style="left:112px;top:659px;width:977px;height:1px;background:#d9d9d9"></div>
<div class="a" style="left:112px;top:660px;width:977px;height:19px;background:#f3f3f3"></div>
<div class="t st" style="left:119px">Slide 1 of 14</div>
<svg style="left:192px;top:663px" width="13" height="12" viewBox="0 0 13 12"><path d="M0.5 0.5h5l1 1 1-1h5v9h-5l-1 1.5-1-1.5h-5z" fill="none" stroke="#333" stroke-width="1"/><path d="M6.5 1.5v9" stroke="#333" stroke-width="0.8"/><path d="M8.5 5l1.3 1.3 2.2-2.6" fill="none" stroke="#333" stroke-width="0.9"/></svg>
<div class="t st" style="left:221px">English (United States)</div>
<svg style="left:337px;top:662px" width="13" height="14" viewBox="0 0 13 14"><circle cx="6" cy="2" r="1.6" fill="none" stroke="#333" stroke-width="0.9"/><path d="M0.5 4.5l5.5 1 5.5-1M6 5.5v3l-3 5M6 8.5l2 2" fill="none" stroke="#333" stroke-width="1"/><path d="M8.5 10l3.5 3.5M12 10l-3.5 3.5" stroke="#333" stroke-width="1"/></svg>
<div class="t st" style="left:354px">Accessibility: Investigate</div>

<svg style="left:702px;top:663px" width="14" height="14" viewBox="0 0 14 14"><path d="M4 4l3-3 3 3" fill="none" stroke="#333" stroke-width="1"/><path d="M0 7.5h14M0 10.5h14M0 13.5h14" stroke="#333" stroke-width="1"/></svg>
<div class="t st" style="left:718px;top:666px">Notes</div>
<div class="a" style="left:762px;top:660px;width:36px;height:18px;background:#dcdcdc"></div>
<svg style="left:773px;top:665px" width="13" height="10" viewBox="0 0 13 10"><rect x="0.5" y="0.5" width="12" height="9" fill="none" stroke="#333"/><path d="M3 0.5v9M3 7.5h9.5" stroke="#333"/><rect x="5" y="2.3" width="5" height="3" fill="none" stroke="#333" stroke-width="0.8"/></svg>
<svg style="left:808px;top:664px" width="13" height="12" viewBox="0 0 13 12"><rect x="0.5" y="0.5" width="5" height="4.5" rx="0.8" fill="none" stroke="#333"/><rect x="7.5" y="0.5" width="5" height="4.5" rx="0.8" fill="none" stroke="#333"/><rect x="0.5" y="7" width="5" height="4.5" rx="0.8" fill="none" stroke="#333"/><rect x="7.5" y="7" width="5" height="4.5" rx="0.8" fill="none" stroke="#333"/></svg>
<svg style="left:844px;top:664px" width="12" height="12" viewBox="0 0 12 12"><path d="M0.5 0.5h5l0.5 0.5 0.5-0.5h5v11h-5l-0.5-0.5-0.5 0.5h-5z" fill="none" stroke="#333"/><path d="M6 1v10M2.5 1v10M9.5 1v10" stroke="#333" stroke-width="0.8"/></svg>
<svg style="left:879px;top:664px" width="11" height="12" viewBox="0 0 11 12"><rect x="0.5" y="0.5" width="10" height="6" fill="none" stroke="#333"/><path d="M5.5 6.5v3M2.5 11.5h6M3.5 2.5h4" stroke="#333"/></svg>
<div class="a" style="left:909px;top:669px;width:7px;height:1px;background:#333"></div>
<div class="a" style="left:921px;top:669px;width:88px;height:1px;background:#8a8a8a"></div>
<div class="a" style="left:965px;top:667px;width:1px;height:5px;background:#8a8a8a"></div>
<div class="a" style="left:944px;top:665px;width:5px;height:9px;background:#555;border-radius:1px"></div>
<svg style="left:1012px;top:665px" width="9" height="9" viewBox="0 0 9 9"><path d="M4.5 0.5v8M0.5 4.5h8" stroke="#333" stroke-width="1"/></svg>
<div class="t st" style="left:1032px">61%</div>
<svg style="left:1060px;top:662px" width="16" height="16" viewBox="0 0 16 16"><rect x="4.5" y="4.5" width="7" height="7" fill="none" stroke="#333"/><path d="M6 3L8 1l2 2M6 13l2 2 2-2M3 6L1 8l2 2M13 6l2 2-2 2" fill="none" stroke="#333" stroke-width="1.1"/></svg>

<!-- window border -->
<div class="a" style="left:111px;top:62px;width:979px;height:618px;border:1.5px solid #c9502e;pointer-events:none"></div>

<div class="t" style="left:1023px;top:705px;font-size:14.3px;color:#555">SLIDEMODEL.COM</div>
</body></html>
